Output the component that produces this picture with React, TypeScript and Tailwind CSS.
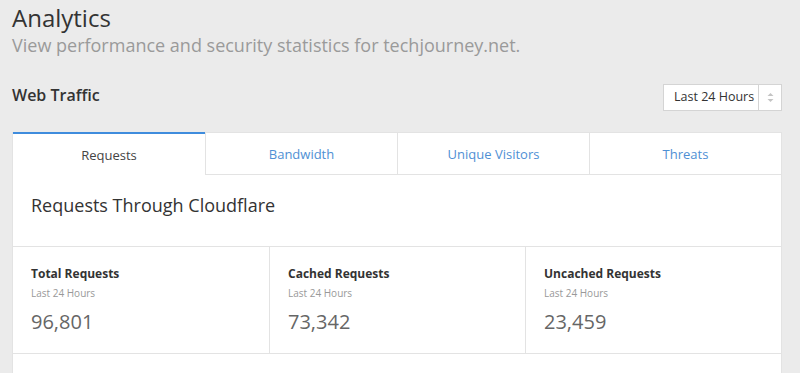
export default function App() {
  const tabs = ["Requests", "Bandwidth", "Unique Visitors", "Threats"];
  const stats = [
    { label: "Total Requests", value: "96,801" },
    { label: "Cached Requests", value: "73,342" },
    { label: "Uncached Requests", value: "23,459" },
  ];

  return (
    <div className="h-[373px] overflow-hidden bg-[#ebebeb] px-3 pt-[3px] font-['Open_Sans',sans-serif] text-[#333]">
      {/* Page header */}
      <h1 className="text-[24px] leading-[30px] text-[#333]">Analytics</h1>
      <p className="text-[18px] leading-[24px] text-[#9a9a9a]">
        View performance and security statistics for techjourney.net.
      </p>

      {/* Section header */}
      <div className="mt-[26px] flex items-start justify-between pr-[6px]">
        <h2 className="pt-[1px] text-[16px] font-semibold leading-[22px] text-[#333]">Web Traffic</h2>
        <div className="mt-[1px] flex h-[27px] w-[119px] border border-[#d4d4d4] bg-white">
          <span className="flex flex-1 items-center pl-[10px] text-[12.5px] text-[#333]">Last 24 Hours</span>
          <span className="flex w-[23px] items-center justify-center border-l border-[#d4d4d4]">
            <svg width="7" height="11" viewBox="0 0 7 11" fill="#c4c4c4">
              <path d="M3.5 1L6.5 4H0.5z" />
              <path d="M3.5 10L6.5 7H0.5z" />
            </svg>
          </span>
        </div>
      </div>

      {/* Card */}
      <div className="mt-[21px] mr-[6px] border-x border-[#e3e3e3] bg-white">
        <div className="grid grid-cols-4">
          {tabs.map((t, i) => (
            <div
              key={t}
              className={
                i === 0
                  ? "flex h-[43px] items-center justify-center border-t-2 border-[#3f8cdd] pt-[3px] text-[13px] text-[#444]"
                  : "flex h-[43px] items-center justify-center border-t border-b border-l border-[#e3e3e3] pt-[3px] text-[13px] text-[#4f90d4]"
              }
            >
              {t}
            </div>
          ))}
        </div>

        <div className="flex h-[72px] items-center border-b border-[#e3e3e3] pb-[10px] pl-[18px]">
          <h3 className="text-[18px] text-[#333]">Requests Through Cloudflare</h3>
        </div>

        <div className="grid grid-cols-3 border-b border-[#e3e3e3]">
          {stats.map((s, i) => (
            <div
              key={s.label}
              className={
                i === 0
                  ? "h-[106px] pl-[18px] pt-[18px]"
                  : "h-[106px] border-l border-[#e3e3e3] pl-[18px] pt-[18px]"
              }
            >
              <div className="text-[12px] font-bold leading-[18px] text-[#333]">{s.label}</div>
              <div className="mt-[3px] text-[10px] leading-[14px] text-[#999]">Last 24 Hours</div>
              <div className="mt-[8px] text-[20px] leading-[28px] text-[#666]">{s.value}</div>
            </div>
          ))}
        </div>
        <div className="h-[20px]" />
      </div>
    </div>
  );
}
